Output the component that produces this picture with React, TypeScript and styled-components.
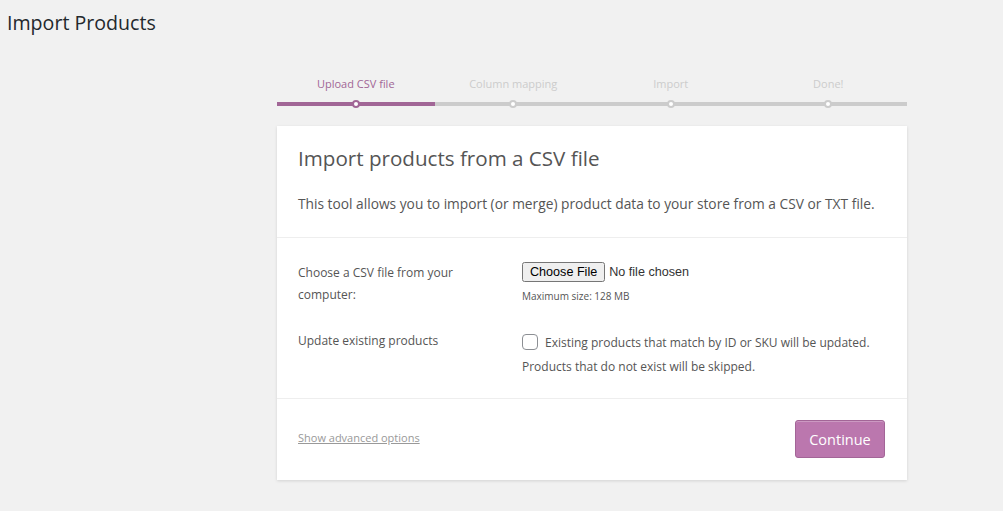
import React from "react";
import styled, { createGlobalStyle } from "styled-components";

const GlobalStyle = createGlobalStyle`
  html, body {
    margin: 0;
    padding: 0;
    background: #f1f1f1;
    font-family: "Open Sans", "Noto Sans", sans-serif;
    color: #444;
  }
`;

const steps = ["Upload CSV file", "Column mapping", "Import", "Done!"];
const activeStep = 0;

export default function App() {
  return (
    <>
      <GlobalStyle />
      <Page>
        <PageTitle>Import Products</PageTitle>
        <Wizard>
          <Steps>
            {steps.map((step, i) => (
              <Step key={step} active={i <= activeStep}>
                {step}
              </Step>
            ))}
          </Steps>
          <Card>
            <CardHeader>
              <CardTitle>Import products from a CSV file</CardTitle>
              <Intro>
                This tool allows you to import (or merge) product data to your
                store from a CSV or TXT file.
              </Intro>
            </CardHeader>
            <FormSection>
              <FormRow>
                <FieldLabel>Choose a CSV file from your computer:</FieldLabel>
                <FieldBody>
                  <FileInput type="file" />
                  <Hint>Maximum size: 128 MB</Hint>
                </FieldBody>
              </FormRow>
              <FormRow>
                <FieldLabel>Update existing products</FieldLabel>
                <CheckLabel>
                  <Checkbox type="checkbox" />
                  Existing products that match by ID or SKU will be updated.
                  Products that do not exist will be skipped.
                </CheckLabel>
              </FormRow>
            </FormSection>
            <Footer>
              <AdvancedLink href="#">Show advanced options</AdvancedLink>
              <ContinueButton>Continue</ContinueButton>
            </Footer>
          </Card>
        </Wizard>
      </Page>
    </>
  );
}

const Page = styled.div`
  display: flex;
  flex-direction: column;
  padding: 9px 0 30px 7px;
`;

const PageTitle = styled.h1`
  margin: 0;
  font-size: 19.6px;
  line-height: 28px;
  font-weight: 400;
  color: #23282d;
`;

const Wizard = styled.div`
  width: 630px;
  margin: 39px 0 0 270px;
  display: flex;
  flex-direction: column;
`;

const Steps = styled.ol`
  list-style: none;
  margin: 0 0 20px;
  padding: 0;
  display: flex;
`;

const Step = styled.li<{ active?: boolean }>`
  position: relative;
  flex: 1;
  text-align: center;
  font-size: 11px;
  line-height: 16px;
  padding: 0 0 10px;
  color: ${(p) => (p.active ? "#a16696" : "#ccc")};
  border-bottom: 4px solid ${(p) => (p.active ? "#a16696" : "#ccc")};

  &::before {
    content: "";
    position: absolute;
    left: 50%;
    bottom: -6px;
    margin-left: -4px;
    width: 4px;
    height: 4px;
    border-radius: 50%;
    background: #fff;
    border: 2px solid ${(p) => (p.active ? "#a16696" : "#ccc")};
  }
`;

const Card = styled.div`
  background: #fff;
  box-shadow: 0 1px 3px rgba(0, 0, 0, 0.13);
  display: flex;
  flex-direction: column;
`;

const CardHeader = styled.div`
  padding: 18px 21px 23px;
  border-bottom: 1px solid #eee;
`;

const CardTitle = styled.h2`
  margin: 0;
  font-size: 20.6px;
  line-height: 28px;
  font-weight: 400;
  color: #555;
`;

const Intro = styled.p`
  margin: 22px 0 0;
  font-size: 13.75px;
  line-height: 20px;
  color: #555;
`;

const FormSection = styled.div`
  padding: 24px 21px 19px;
  border-bottom: 1px solid #eee;
  display: flex;
  flex-direction: column;
  gap: 24px;
`;

const FormRow = styled.div`
  display: flex;
  align-items: flex-start;
`;

const FieldLabel = styled.div`
  width: 190px;
  margin-right: 34px;
  font-size: 12px;
  line-height: 22px;
  color: #555;
`;

const FieldBody = styled.div`
  display: flex;
  flex-direction: column;
`;

const FileInput = styled.input`
  font-family: "Liberation Sans", Arial, sans-serif;
  font-size: 12.6px;
  color: #333;
  margin: 0;
`;

const Hint = styled.span`
  margin-top: 7px;
  font-size: 10px;
  line-height: 14px;
  color: #555;
`;

const CheckLabel = styled.label`
  flex: 1;
  padding-top: 1px;
  font-size: 12px;
  line-height: 24px;
  color: #555;
`;

const Checkbox = styled.input`
  appearance: none;
  width: 16px;
  height: 16px;
  margin: 0 7px 0 0;
  vertical-align: -3px;
  border: 1px solid #8c8f94;
  border-radius: 4px;
  background: #fff;
`;

const Footer = styled.div`
  display: flex;
  align-items: center;
  justify-content: space-between;
  padding: 21px 22px 22px 21px;
`;

const AdvancedLink = styled.a`
  font-size: 11px;
  line-height: 16px;
  margin-bottom: 2px;
  color: #999;
  text-decoration: underline;
`;

const ContinueButton = styled.button`
  width: 90px;
  height: 38px;
  font-family: "Open Sans", "Noto Sans", sans-serif;
  font-size: 14.5px;
  color: #fff;
  background: #bb77ae;
  border: 1px solid #a36597;
  border-radius: 3px;
  box-shadow: inset 0 1px 0 rgba(255, 255, 255, 0.25);
  cursor: pointer;
`;
